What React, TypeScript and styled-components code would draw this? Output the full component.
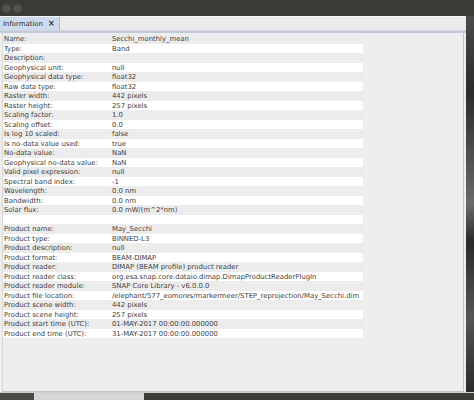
import React from "react";
import styled, { createGlobalStyle } from "styled-components";

const Global = createGlobalStyle`
  html, body { margin: 0; padding: 0; background: #3c3b37; overflow: hidden; }
  #root { width: 474px; height: 400px; }
`;

const Screen = styled.div`
  width: 474px;
  height: 400px;
  display: flex;
  flex-direction: column;
  background: #2e2e2c;
  font-family: "DejaVu Sans", "Liberation Sans", sans-serif;
`;

const TitleBar = styled.div`
  height: 16px;
  flex: none;
  background: #3c3b37;
  display: flex;
  align-items: center;
  gap: 2px;
  padding-left: 2px;
`;

const WinButton = styled.span`
  width: 7px;
  height: 7px;
  border-radius: 50%;
  background: #55544f;
  border: 1px solid #4a4945;
`;

const Middle = styled.div`
  flex: 1;
  display: flex;
  min-height: 0;
`;

const Window = styled.div`
  width: 466px;
  flex: none;
  display: flex;
  flex-direction: column;
  background: #eeeeee;
`;

const DesktopEdge = styled.div`
  flex: 1;
  background: linear-gradient(180deg, #4a4a48 0%, #2b2b2a 20%, #6a6a68 50%, #2a2a29 60%, #555 80%, #2a2a2a 100%);
`;

const TabStrip = styled.div`
  height: 13px;
  flex: none;
  display: flex;
  align-items: stretch;
  background: #ebebeb;
  border-top: 1px solid #f6f6f6;
  border-bottom: 1px solid #d4d4d4;
`;

const Tab = styled.div`
  display: flex;
  align-items: center;
  gap: 5px;
  padding: 0 4px 0 3px;
  background: #cddbee;
  border-right: 1px solid #a9b8cc;
  color: #2e2e2e;
  font-size: 6.9px;
`;

const Close = styled.span`
  font-size: 8px;
  font-weight: bold;
  color: #333;
`;

const Accent = styled.div`
  height: 2px;
  flex: none;
  background: #bfcadb;
`;

const Panel = styled.div`
  flex: 1;
  margin: 0 2px 0 2px;
  padding-top: 1px;
  border-left: 1px solid #d8d8d8;
  border-right: 1px solid #c4c4c4;
  border-bottom: 1px solid #c4c4c4;
  background: #eeeeee;
  display: flex;
  flex-direction: column;
`;

const Table = styled.div`
  width: 360px;
  display: flex;
  flex-direction: column;
`;

const Row = styled.div<{ $odd: boolean }>`
  height: 9.5px;
  display: grid;
  grid-template-columns: 108px 1fr;
  background: ${(p) => (p.$odd ? "#ffffff" : "#ececec")};
  font-size: 6.86px;
  line-height: 10.5px;
  color: #404040;
  white-space: nowrap;
  overflow: hidden;
`;

const Cell = styled.span`
  padding-left: 1px;
  overflow: hidden;
`;

const BottomBar = styled.div`
  height: 7px;
  flex: none;
  display: flex;
  background: #3c3b37;
  border-top: 1px solid #cfcfcf;
`;

const BottomSeg = styled.div<{ $w: number; $c: string }>`
  width: ${(p) => p.$w}px;
  background: ${(p) => p.$c};
`;

const rows: [string, string][] = [
  ["Name:", "Secchi_monthly_mean"],
  ["Type:", "Band"],
  ["Description:", ""],
  ["Geophysical unit:", "null"],
  ["Geophysical data type:", "float32"],
  ["Raw data type:", "float32"],
  ["Raster width:", "442 pixels"],
  ["Raster height:", "257 pixels"],
  ["Scaling factor:", "1.0"],
  ["Scaling offset:", "0.0"],
  ["Is log 10 scaled:", "false"],
  ["Is no-data value used:", "true"],
  ["No-data value:", "NaN"],
  ["Geophysical no-data value:", "NaN"],
  ["Valid pixel expression:", "null"],
  ["Spectral band index:", "-1"],
  ["Wavelength:", "0.0 nm"],
  ["Bandwidth:", "0.0 nm"],
  ["Solar flux:", "0.0 mW/(m^2*nm)"],
  ["", ""],
  ["Product name:", "May_Secchi"],
  ["Product type:", "BINNED-L3"],
  ["Product description:", "null"],
  ["Product format:", "BEAM-DIMAP"],
  ["Product reader:", "DIMAP (BEAM profile) product reader"],
  ["Product reader class:", "org.esa.snap.core.dataio.dimap.DimapProductReaderPlugIn"],
  ["Product reader module:", "SNAP Core Library - v6.0.0.0"],
  ["Product file location:", "/elephant/577_eomores/markermeer/STEP_reprojection/May_Secchi.dim"],
  ["Product scene width:", "442 pixels"],
  ["Product scene height:", "257 pixels"],
  ["Product start time (UTC):", "01-MAY-2017 00:00:00.000000"],
  ["Product end time (UTC):", "31-MAY-2017 00:00:00.000000"],
];

export default function App() {
  return (
    <>
      <Global />
      <Screen>
        <TitleBar>
          <WinButton />
          <WinButton />
        </TitleBar>
        <Middle>
          <Window>
            <TabStrip>
              <Tab>
                Information <Close>×</Close>
              </Tab>
            </TabStrip>
            <Accent />
            <Panel>
              <Table>
                {rows.map(([k, v], i) => (
                  <Row key={i} $odd={i % 2 === 1}>
                    <Cell>{k}</Cell>
                    <Cell>{v}</Cell>
                  </Row>
                ))}
              </Table>
            </Panel>
          </Window>
          <DesktopEdge />
        </Middle>
        <BottomBar>
          <BottomSeg $w={34} $c="#4a4a46" />
          <BottomSeg $w={110} $c="#d6d6d6" />
          <BottomSeg $w={330} $c="#3c3b37" />
        </BottomBar>
      </Screen>
    </>
  );
}
